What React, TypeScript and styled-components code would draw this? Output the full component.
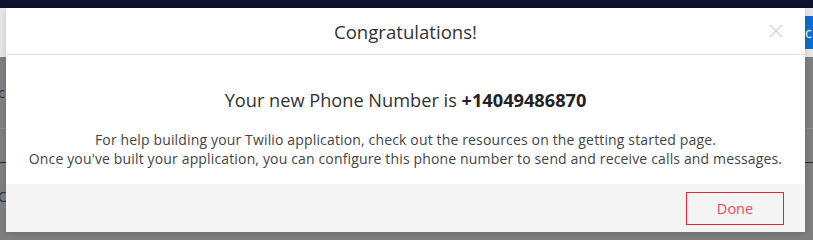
import React from "react";
import styled, { createGlobalStyle } from "styled-components";

const Global = createGlobalStyle`
  html, body { margin: 0; padding: 0; }
  body { width: 813px; height: 240px; overflow: hidden; background: #7f7f7f; font-family: "Open Sans", Lato, sans-serif; }
`;

const Screen = styled.div`
  width: 813px;
  height: 240px;
  display: flex;
  flex-direction: column;
  position: relative;
  overflow: hidden;
`;

const TopBar = styled.div`
  height: 8px;
  background: #0d1230;
  flex: none;
`;

const Stage = styled.div`
  position: relative;
  flex: 1;
  display: flex;
  flex-direction: column;
`;

const PageHeader = styled.div`
  height: 49px;
  background: #e6e6e6;
  display: flex;
  justify-content: flex-end;
  align-items: center;
`;

const BlueButton = styled.div`
  width: 8px;
  height: 33px;
  background: #0c6fcf;
  color: #fff;
  font-size: 14px;
  line-height: 33px;
  overflow: hidden;
  white-space: nowrap;
`;

const PageBody = styled.div`
  flex: 1;
  background: #7f7f7f;
  display: flex;
  flex-direction: column;
`;

const PageRow = styled.div<{ $h: number; $line?: string }>`
  height: ${(p) => p.$h}px;
  border-bottom: ${(p) => (p.$line ? `1px solid ${p.$line}` : "none")};
  color: #2c3347;
  font-size: 14px;
  display: flex;
  align-items: center;
  margin-left: -2px;
`;

const Modal = styled.div`
  position: absolute;
  left: 6px;
  top: 0;
  width: 799px;
  height: 224px;
  background: #fff;
  display: flex;
  flex-direction: column;
  box-shadow: 0 2px 6px rgba(0, 0, 0, 0.15);
`;

const Header = styled.div`
  height: 46px;
  border-bottom: 1px solid #e3e3e3;
  display: flex;
  align-items: center;
  justify-content: center;
  position: relative;
  flex: none;
`;

const Title = styled.h2`
  margin: 0;
  font-size: 18.6px;
  font-weight: 400;
  color: #333;
`;

const Close = styled.button`
  position: absolute;
  right: 22px;
  top: 16px;
  width: 14px;
  height: 14px;
  padding: 0;
  border: none;
  background: transparent;
  display: flex;
`;

const Body = styled.div`
  flex: 1;
  display: flex;
  flex-direction: column;
  align-items: center;
  padding-top: 33px;
`;

const Lead = styled.p`
  margin: 0 0 18px;
  font-size: 18.2px;
  color: #333;
  line-height: 24px;
  b { font-weight: 700; color: #222; }
`;

const Info = styled.p`
  margin: 0;
  font-size: 14px;
  letter-spacing: 0.15px;
  line-height: 19px;
  color: #444;
  text-align: center;
`;

const Footer = styled.div`
  height: 48px;
  background: #f5f5f5;
  display: flex;
  justify-content: flex-end;
  align-items: center;
  padding-right: 21px;
  flex: none;
`;

const DoneButton = styled.button`
  width: 98px;
  height: 33px;
  border: 1px solid #e3243f;
  background: transparent;
  color: #ea4a62;
  font-family: "Open Sans", Lato, sans-serif;
  font-size: 14.5px;
  cursor: pointer;
`;

export default function App() {
  return (
    <Screen>
      <Global />
      <TopBar />
      <Stage>
        <PageHeader>
          <BlueButton>c</BlueButton>
        </PageHeader>
        <PageBody>
          <PageRow $h={71} $line="#8c8c8c">c</PageRow>
          <PageRow $h={33} $line="#2b2b2b" />
          <PageRow $h={66}>C</PageRow>
        </PageBody>
        <Modal>
          <Header>
            <Title>Congratulations!</Title>
            <Close aria-label="Close">
              <svg width="14" height="14" viewBox="0 0 14 14">
                <path d="M1 1L13 13M13 1L1 13" stroke="#d2d2d2" strokeWidth="1.2" fill="none" />
              </svg>
            </Close>
          </Header>
          <Body>
            <Lead>
              Your new Phone Number is <b>+14049486870</b>
            </Lead>
            <Info>
              For help building your Twilio application, check out the resources on the getting started page.
              <br />
              Once you've built your application, you can configure this phone number to send and receive calls and messages.
            </Info>
          </Body>
          <Footer>
            <DoneButton>Done</DoneButton>
          </Footer>
        </Modal>
      </Stage>
    </Screen>
  );
}
